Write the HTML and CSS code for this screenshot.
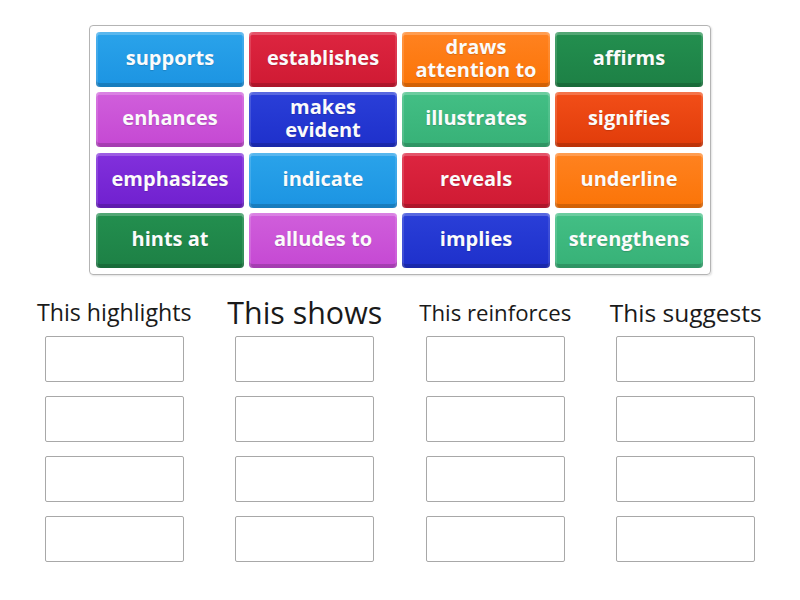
FILE: index.html
```html
<!DOCTYPE html>
<html>
<head>
<meta charset="utf-8">
<link rel="stylesheet" href="styles.css">
</head>
<body>
<div class="page">
  <div class="bank">
    <div class="tile c-blue">supports</div>
    <div class="tile c-red">establishes</div>
    <div class="tile c-orange"><div class="lines"><span class="ln">draws</span><span class="ln">attention to</span></div></div>
    <div class="tile c-green">affirms</div>
    <div class="tile c-pink">enhances</div>
    <div class="tile c-navy"><div class="lines"><span class="ln">makes</span><span class="ln">evident</span></div></div>
    <div class="tile c-teal">illustrates</div>
    <div class="tile c-redorange">signifies</div>
    <div class="tile c-purple">emphasizes</div>
    <div class="tile c-blue">indicate</div>
    <div class="tile c-red">reveals</div>
    <div class="tile c-orange">underline</div>
    <div class="tile c-green">hints at</div>
    <div class="tile c-pink">alludes to</div>
    <div class="tile c-navy">implies</div>
    <div class="tile c-teal">strengthens</div>
  </div>
  <div class="groups">
    <div class="group">
      <div class="head"><span class="h1">This highlights</span></div>
      <div class="slot"></div><div class="slot"></div><div class="slot"></div><div class="slot"></div>
    </div>
    <div class="group">
      <div class="head"><span class="h2">This shows</span></div>
      <div class="slot"></div><div class="slot"></div><div class="slot"></div><div class="slot"></div>
    </div>
    <div class="group">
      <div class="head"><span class="h3">This reinforces</span></div>
      <div class="slot"></div><div class="slot"></div><div class="slot"></div><div class="slot"></div>
    </div>
    <div class="group">
      <div class="head"><span class="h4">This suggests</span></div>
      <div class="slot"></div><div class="slot"></div><div class="slot"></div><div class="slot"></div>
    </div>
  </div>
</div>
</body>
</html>
```

FILE: styles.css
```css
html, body {
  margin: 0;
  padding: 0;
  background: #ffffff;
}
body {
  font-family: "Open Sans", "Liberation Sans", sans-serif;
  width: 800px;
  height: 600px;
  overflow: hidden;
}
.page {
  padding-top: 25px;
}
.bank {
  margin-left: 89px;
  width: 608px;
  padding: 6px;
  border: 1px solid #b4b4b4;
  border-radius: 4px;
  box-shadow: 1px 1px 2px rgba(0,0,0,0.12);
  display: grid;
  grid-template-columns: repeat(4, 148px);
  grid-template-rows: repeat(4, 55px);
  column-gap: 5px;
  row-gap: 5.4px;
}
.tile {
  border-radius: 4px;
  display: flex;
  align-items: center;
  justify-content: center;
  text-align: center;
  color: #fbfbfb;
  font-weight: 700;
  font-size: 20px;
  line-height: 23px;
  padding-bottom: 4px;
  box-sizing: border-box;
  box-shadow:
    inset 0 3px 0 rgba(255,255,255,0.22),
    inset 2px 0 0 rgba(255,255,255,0.14),
    inset -2px 0 0 rgba(255,255,255,0.10),
    inset 0 -4px 0 rgba(0,0,0,0.16);
  text-shadow: 0 1px 1px rgba(0,0,0,0.15);
}
.lines {
  display: flex;
  flex-direction: column;
  align-items: center;
}
.ln {
  display: block;
  height: 23px;
  line-height: 23px;
}
.c-blue { background: linear-gradient(#2aa3ea, #1c94e2); }
.c-red { background: linear-gradient(#dd2540, #cf1a33); }
.c-orange { background: linear-gradient(#ff8220, #fb7407); }
.c-green { background: linear-gradient(#238f4f, #1d8045); }
.c-pink { background: linear-gradient(#d05fdb, #c548d3); }
.c-navy { background: linear-gradient(#2a3fd8, #1e30cb); }
.c-teal { background: linear-gradient(#43bf85, #37b177); }
.c-redorange { background: linear-gradient(#f24e18, #e13c0a); }
.c-purple { background: linear-gradient(#8230dc, #7020cf); }

.groups {
  display: flex;
  margin-left: 19px;
  margin-top: 17px;
}
.group {
  width: 190.5px;
  display: flex;
  flex-direction: column;
  align-items: center;
  gap: 14px;
}
.head {
  height: 40px;
  display: flex;
  align-items: center;
  justify-content: center;
  white-space: nowrap;
  color: #1a1a1a;
  margin-bottom: -10px;
}
.h1 { font-size: 23.2px; }
.h2 { font-size: 30.4px; }
.h3 { font-size: 22.2px; }
.h4 { font-size: 24.5px; }
.slot {
  width: 137px;
  height: 44px;
  border: 1px solid #a8a8a8;
  border-radius: 2px;
  background: #fff;
}
```
